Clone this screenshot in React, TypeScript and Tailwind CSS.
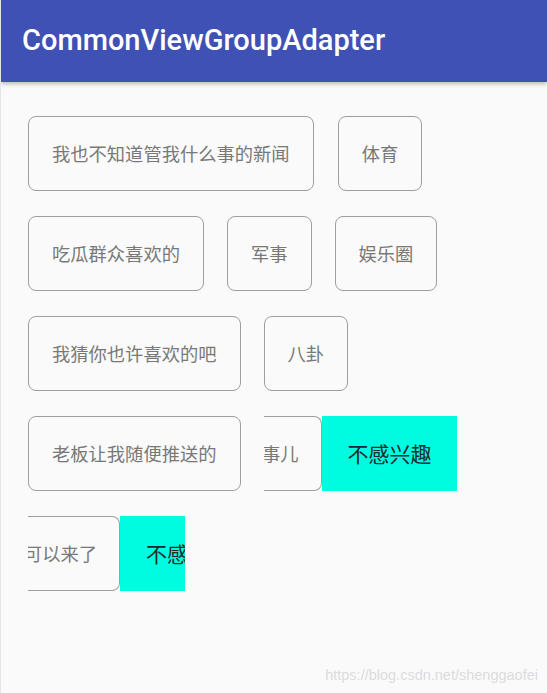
import React from "react";

const cjk = { fontFamily: '"Noto Sans CJK SC", "Noto Sans", sans-serif' };

function Chip({ text }: { text: string }) {
  return (
    <div
      className="h-[75px] flex items-center px-[23px] border-[1.5px] border-[#9e9e9e] rounded-[8px] text-[18.3px] text-[#787878] shrink-0 whitespace-nowrap"
      style={cjk}
    >
      {text}
    </div>
  );
}

export default function App() {
  return (
    <div className="relative w-[547px] h-[693px] bg-[#fafafa] border-l border-[#e6e6e6] overflow-hidden flex flex-col">
      <div
        className="h-[82px] bg-[#3f51b5] flex items-center pl-[21px] text-white text-[29px] font-medium shadow-[0_2px_4px_rgba(0,0,0,0.25)] z-10 shrink-0"
        style={{ fontFamily: 'Roboto, "Noto Sans", sans-serif' }}
      >
        CommonViewGroupAdapter
      </div>
      <div className="flex flex-col gap-[25px] pt-[34px] pl-[27px]">
        <div className="flex gap-[24px]">
          <Chip text="我也不知道管我什么事的新闻" />
          <Chip text="体育" />
        </div>
        <div className="flex gap-[23px]">
          <Chip text="吃瓜群众喜欢的" />
          <Chip text="军事" />
          <Chip text="娱乐圈" />
        </div>
        <div className="flex gap-[23px]">
          <Chip text="我猜你也许喜欢的吧" />
          <Chip text="八卦" />
        </div>
        <div className="flex gap-[23px]">
          <Chip text="老板让我随便推送的" />
          <div className="flex h-[75px]">
            <div
              className="w-[58px] h-[75px] flex items-center justify-end pr-[22px] border-y-[1.5px] border-r-[1.5px] border-[#9e9e9e] rounded-r-[8px] text-[18.3px] text-[#787878] overflow-hidden whitespace-nowrap"
              style={cjk}
            >
              啥事儿
            </div>
            <div
              className="w-[135px] h-[75px] bg-[#00fce0] flex items-center pl-[26px] text-[21px] text-[#1c2b2a] whitespace-nowrap"
              style={cjk}
            >
              不感兴趣
            </div>
          </div>
        </div>
        <div className="flex">
          <div
            className="w-[92px] h-[75px] flex items-center justify-end pr-[22px] border-y-[1.5px] border-r-[1.5px] border-[#9e9e9e] rounded-r-[8px] text-[18.3px] text-[#787878] overflow-hidden whitespace-nowrap"
            style={cjk}
          >
            现在可以来了
          </div>
          <div
            className="w-[65px] h-[75px] bg-[#00fce0] flex items-center pl-[26px] text-[21px] text-[#1c2b2a] whitespace-nowrap overflow-hidden"
            style={cjk}
          >
            不感兴趣
          </div>
        </div>
      </div>
      <div
        className="absolute right-[9px] bottom-[6px] text-[14.5px] text-[#dcdcdc]"
        style={{ fontFamily: '"Liberation Sans", Arial, sans-serif' }}
      >
        https://blog.csdn.net/shenggaofei
      </div>
    </div>
  );
}
